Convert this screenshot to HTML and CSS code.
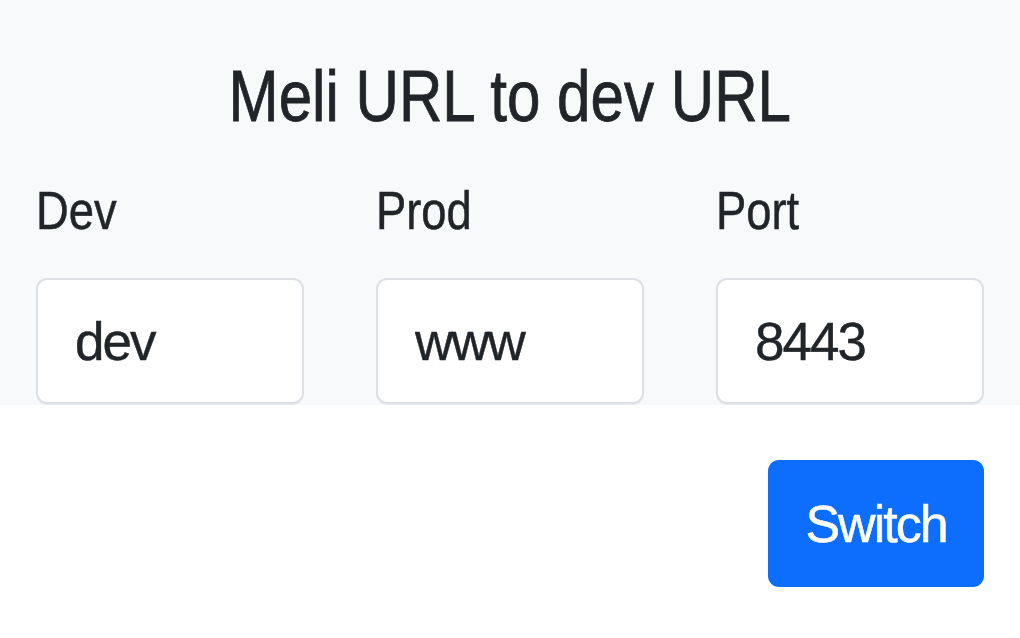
FILE: index.html
```html
<!DOCTYPE html>
<html lang="en">
<head>
<meta charset="utf-8">
<title>Meli URL to dev URL</title>
<link rel="stylesheet" href="styles.css">
</head>
<body>
  <div class="panel">
    <h1 class="title"><span class="title-text">Meli URL to dev URL</span></h1>
    <div class="fields">
      <div class="field">
        <label class="label" for="dev"><span class="label-text">Dev</span></label>
        <input class="input" id="dev" type="text" value="dev">
      </div>
      <div class="field">
        <label class="label" for="prod"><span class="label-text">Prod</span></label>
        <input class="input" id="prod" type="text" value="www">
      </div>
      <div class="field">
        <label class="label" for="port"><span class="label-text">Port</span></label>
        <input class="input" id="port" type="text" value="8443">
      </div>
    </div>
  </div>
  <div class="actions">
    <button class="btn" type="button">Switch</button>
  </div>
</body>
</html>
```
FILE: styles.css
```css
html, body {
  margin: 0;
  padding: 0;
  background: #ffffff;
}
body {
  font-family: "Liberation Sans", Arial, sans-serif;
  color: #212529;
  width: 1020px;
  height: 638px;
  overflow: hidden;
}
.panel {
  background: #f8f9fa;
  padding: 53px 36px 0 36px;
  height: 405px;
  box-sizing: border-box;
}
.title {
  margin: 0;
  font-size: 72px;
  line-height: 86px;
  font-weight: 400;
  text-align: center;
  -webkit-text-stroke: 0.8px #212529;
}
.title-text {
  display: inline-block;
  transform: scaleX(0.835);
  transform-origin: center;
}
.fields {
  display: grid;
  grid-template-columns: 1fr 1fr 1fr;
  column-gap: 72px;
  margin-top: 39px;
}
.field {
  display: flex;
  flex-direction: column;
}
.label {
  font-size: 54px;
  line-height: 64px;
  margin-bottom: 36px;
  -webkit-text-stroke: 0.5px #212529;
}
.label-text {
  display: inline-block;
  transform: scaleX(0.84);
  transform-origin: left center;
}
.input {
  box-sizing: border-box;
  width: 100%;
  height: 126px;
  margin: 0;
  padding: 0 0 0 37px;
  font-family: inherit;
  font-size: 53px;
  letter-spacing: -2px;
  color: #212529;
  -webkit-text-stroke: 0.4px #212529;
  background: #ffffff;
  border: 2px solid #dde1e5;
  border-radius: 11px;
  box-shadow: 0 1px 1px rgba(0, 0, 0, 0.06);
  outline: none;
}
.actions {
  display: flex;
  justify-content: flex-end;
  padding: 55px 36px 0 36px;
}
.btn {
  width: 216px;
  height: 127px;
  margin: 0;
  padding: 0;
  border: none;
  border-radius: 11px;
  background: #0d6efd;
  color: #ffffff;
  font-family: inherit;
  font-size: 52px;
  letter-spacing: -2px;
  line-height: 1;
  -webkit-text-stroke: 0.5px #ffffff;
}
```
